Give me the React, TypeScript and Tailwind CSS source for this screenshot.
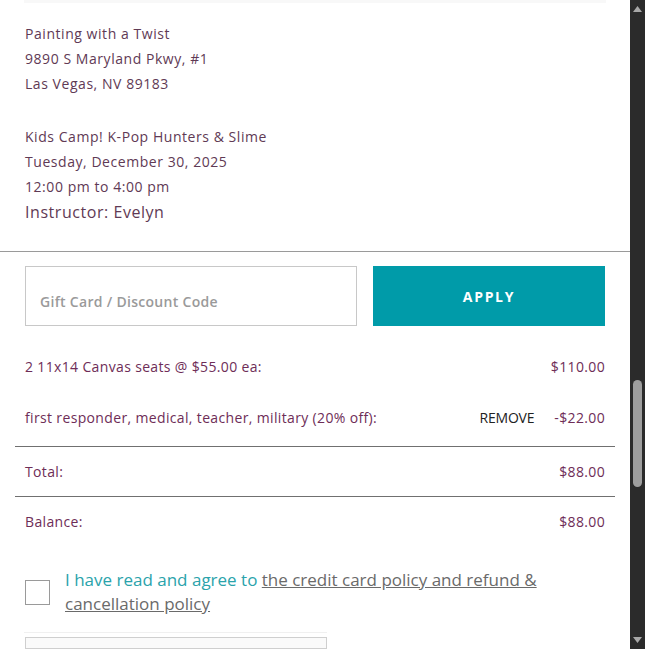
import { useState } from "react";

const rows = [
  { label: "2 11x14 Canvas seats @ $55.00 ea:", amount: "$110.00" },
  { label: "first responder, medical, teacher, military (20% off):", amount: "-$22.00", removable: true },
];

export default function App() {
  const [code, setCode] = useState("");
  const [agreed, setAgreed] = useState(false);

  return (
    <div className="flex h-[649px] overflow-hidden bg-white font-['Open_Sans',sans-serif]">
      <main className="flex-1 flex flex-col">
        <div className="mx-[24px] h-[12px] bg-[#f8f8f8]" />

        <div className="px-[25px] pt-[18px] text-[14px] leading-[25px] tracking-[0.55px] text-[#5f3a55]">
          <p>Painting with a Twist</p>
          <p>9890 S Maryland Pkwy, #1</p>
          <p>Las Vegas, NV 89183</p>
          <div className="h-[28px]" />
          <p>Kids Camp! K-Pop Hunters &amp; Slime</p>
          <p>Tuesday, December 30, 2025</p>
          <p>12:00 pm to 4:00 pm</p>
          <p className="text-[16px] leading-[26px]">Instructor: Evelyn</p>
        </div>

        <hr className="mt-[26px] border-0 border-t border-[#9a9a9a]" />

        <div className="mt-[14px] px-[25px] flex gap-[16px]">
          <input
            value={code}
            onChange={(e) => setCode(e.target.value)}
            placeholder="Gift Card / Discount Code"
            className="w-[332px] h-[60px] border border-[#c8c8c8] px-[14px] pt-[10px] text-[14px] font-semibold tracking-[0.3px] text-[#555] placeholder:text-[#9a9a9a] outline-none"
          />
          <button className="flex-1 h-[60px] bg-[#009ba9] text-white text-[14px] font-bold tracking-[0.12em]">
            APPLY
          </button>
        </div>

        <div className="mt-[15px] mx-[15px] text-[14px] tracking-[0.35px] text-[#6e2d57]">
          {rows.map((r) => (
            <div key={r.label} className="h-[51px] px-[10px] flex items-center justify-between">
              <span>{r.label}</span>
              <div className="flex items-center gap-[20px]">
                {r.removable && <button className="text-[#222] text-[14px] tracking-[-0.2px]">REMOVE</button>}
                <span>{r.amount}</span>
              </div>
            </div>
          ))}
          <div className="mt-[3px] border-t border-[#707070] h-[50px] px-[10px] flex items-center justify-between">
            <span>Total:</span>
            <span>$88.00</span>
          </div>
          <div className="border-t border-[#707070] h-[50px] px-[10px] flex items-center justify-between">
            <span>Balance:</span>
            <span>$88.00</span>
          </div>
        </div>

        <label className="mt-[22px] px-[25px] flex items-center gap-[15px] cursor-pointer">
          <span
            onClick={() => setAgreed(!agreed)}
            className="w-[25px] h-[25px] shrink-0 border border-[#9a9a9a] bg-white flex items-center justify-center text-[#009ba9] text-[16px]"
          >
            {agreed ? "✓" : ""}
          </span>
          <span className="text-[17px] leading-[24px] text-[#2aa3ab]">
            I have read and agree to{" "}
            <a className="text-[#6a6a6a] underline">the credit card policy and refund &amp; cancellation policy</a>
          </span>
        </label>

        <div className="mt-[16px] ml-[24px] w-[303px] border-t border-[#f0f0f0]" />
        <div className="mt-[4px] ml-[25px] w-[302px] h-[40px] border border-[#cfcfcf] bg-[#fafafa]" />
      </main>

      <div className="w-[15px] bg-[#2b2b2b] flex flex-col items-center justify-between py-[6px]">
        <svg width="9" height="6" viewBox="0 0 9 6"><path d="M0 6 L4.5 0 L9 6 Z" fill="#a8a8a8" /></svg>
        <div className="flex-1 flex flex-col items-center pt-[368px]">
          <div className="w-[9px] h-[107px] rounded-full bg-[#9e9e9e]" />
        </div>
        <svg width="9" height="6" viewBox="0 0 9 6"><path d="M0 0 L4.5 6 L9 0 Z" fill="#a8a8a8" /></svg>
      </div>
    </div>
  );
}
